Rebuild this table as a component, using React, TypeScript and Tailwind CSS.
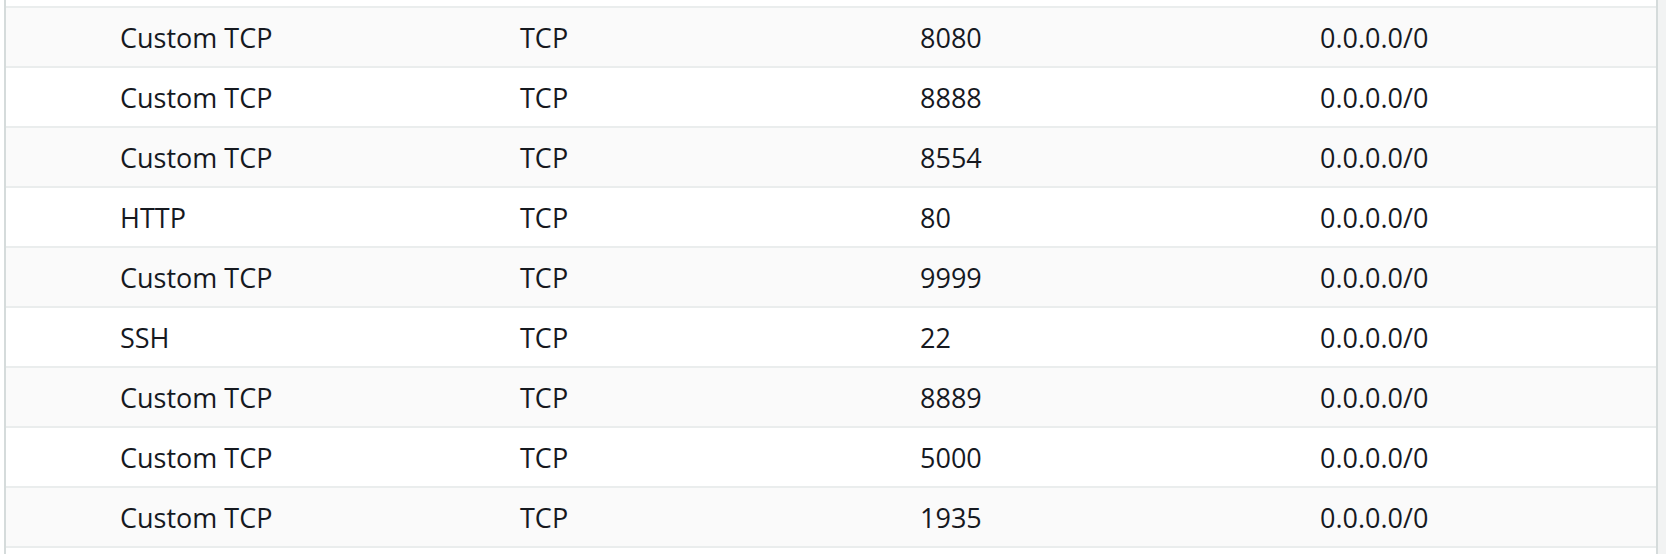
import React from "react";

const rules = [
  { type: "Custom TCP", protocol: "TCP", port: "8080", source: "0.0.0.0/0" },
  { type: "Custom TCP", protocol: "TCP", port: "8888", source: "0.0.0.0/0" },
  { type: "Custom TCP", protocol: "TCP", port: "8554", source: "0.0.0.0/0" },
  { type: "HTTP", protocol: "TCP", port: "80", source: "0.0.0.0/0" },
  { type: "Custom TCP", protocol: "TCP", port: "9999", source: "0.0.0.0/0" },
  { type: "SSH", protocol: "TCP", port: "22", source: "0.0.0.0/0" },
  { type: "Custom TCP", protocol: "TCP", port: "8889", source: "0.0.0.0/0" },
  { type: "Custom TCP", protocol: "TCP", port: "5000", source: "0.0.0.0/0" },
  { type: "Custom TCP", protocol: "TCP", port: "1935", source: "0.0.0.0/0" },
];

const App = () => {
  return (
    <div
      className="flex w-[1666px] h-[554px] bg-white overflow-hidden text-[#16191f]"
      style={{ fontFamily: '"Open Sans", "Noto Sans", sans-serif' }}
    >
      <div className="ml-[4px] w-[1654px] h-full border-x-2 border-[#d5dbdb] pt-[6px] bg-white overflow-hidden">
        <div className="border-b-2 border-[#eaeded]">
          {rules.map((r, i) => (
            <div
              key={i}
              className={`flex items-center h-[60px] border-t-2 border-[#eaeded] pl-[114px] pt-[2px] text-[27px] font-medium ${
                i % 2 === 0 ? "bg-[#fafafa]" : "bg-white"
              }`}
            >
              <span className="w-[400px] shrink-0">{r.type}</span>
              <span className="w-[400px] shrink-0">{r.protocol}</span>
              <span className="w-[400px] shrink-0">{r.port}</span>
              <span className="w-[400px] shrink-0">{r.source}</span>
            </div>
          ))}
        </div>
      </div>
      <div className="flex-1 bg-[#f2f3f3]"></div>
    </div>
  );
};

export default App;
